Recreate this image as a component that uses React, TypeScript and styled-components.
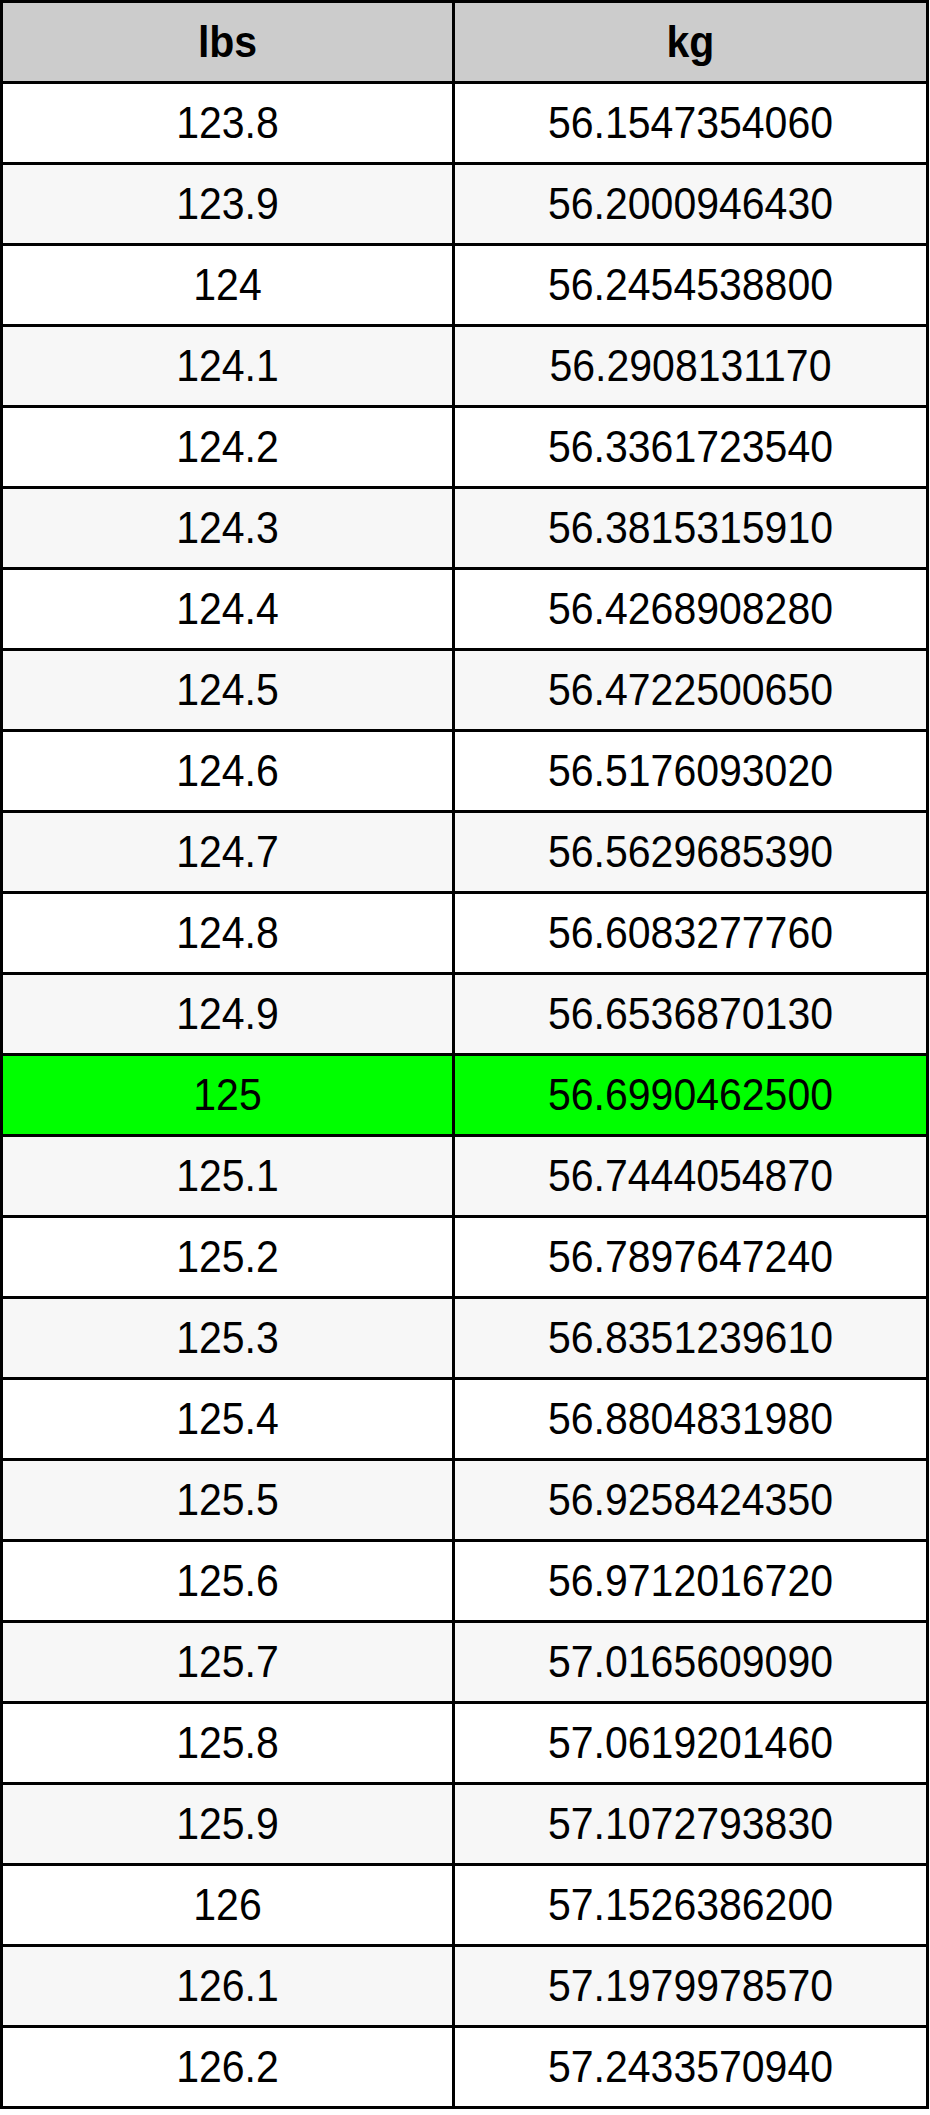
import React from "react";
import styled, { createGlobalStyle } from "styled-components";

const Global = createGlobalStyle`
  html, body { margin: 0; padding: 0; background: #ffffff; }
  body { font-family: "Liberation Sans", Arial, sans-serif; }
`;

const Table = styled.div`
  display: grid;
  grid-template-columns: 449px 471px;
  grid-auto-rows: 78px;
  gap: 3px;
  padding: 3px;
  width: 929px;
  box-sizing: border-box;
  background: #000000;
`;

type Tone = "head" | "plain" | "alt" | "hit";

const bg: Record<Tone, string> = {
  head: "#cccccc",
  plain: "#ffffff",
  alt: "#f7f7f7",
  hit: "#00ff00",
};

const Cell = styled.div<{ $tone: Tone }>`
  display: flex;
  align-items: center;
  justify-content: center;
  background: ${(p) => bg[p.$tone]};
  color: #000000;
  font-family: "Liberation Sans", Arial, sans-serif;
  font-size: 41px;
  font-weight: ${(p) => (p.$tone === "head" ? 700 : 400)};
  line-height: 1;
`;

const Text = styled.span`
  display: inline-block;
  transform: scaleY(1.08);
`;

const rows: [string, string][] = [
  ["123.8", "56.1547354060"],
  ["123.9", "56.2000946430"],
  ["124", "56.2454538800"],
  ["124.1", "56.2908131170"],
  ["124.2", "56.3361723540"],
  ["124.3", "56.3815315910"],
  ["124.4", "56.4268908280"],
  ["124.5", "56.4722500650"],
  ["124.6", "56.5176093020"],
  ["124.7", "56.5629685390"],
  ["124.8", "56.6083277760"],
  ["124.9", "56.6536870130"],
  ["125", "56.6990462500"],
  ["125.1", "56.7444054870"],
  ["125.2", "56.7897647240"],
  ["125.3", "56.8351239610"],
  ["125.4", "56.8804831980"],
  ["125.5", "56.9258424350"],
  ["125.6", "56.9712016720"],
  ["125.7", "57.0165609090"],
  ["125.8", "57.0619201460"],
  ["125.9", "57.1072793830"],
  ["126", "57.1526386200"],
  ["126.1", "57.1979978570"],
  ["126.2", "57.2433570940"],
];

export default function App() {
  return (
    <>
      <Global />
      <Table>
        <Cell $tone="head"><Text>lbs</Text></Cell>
        <Cell $tone="head"><Text>kg</Text></Cell>
        {rows.map(([lbs, kg], i) => {
          const tone: Tone = lbs === "125" ? "hit" : i % 2 === 1 ? "alt" : "plain";
          return (
            <React.Fragment key={lbs}>
              <Cell $tone={tone}><Text>{lbs}</Text></Cell>
              <Cell $tone={tone}><Text>{kg}</Text></Cell>
            </React.Fragment>
          );
        })}
      </Table>
    </>
  );
}
